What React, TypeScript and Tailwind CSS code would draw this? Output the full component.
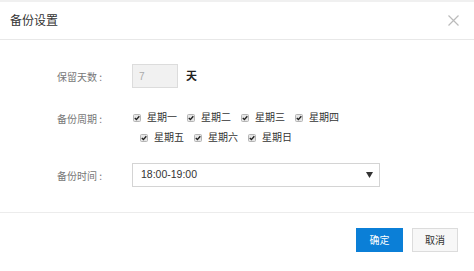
import React from 'react';

const days1 = ['星期一', '星期二', '星期三', '星期四'];
const days2 = ['星期五', '星期六', '星期日'];

function Check({ label }: { label: string }) {
    return (
        <label className="flex items-center mr-[10px]">
            <svg width="8" height="8" viewBox="0 0 8 8" className="mr-[6px]">
                <rect x="0.5" y="0.5" width="7" height="7" rx="1" fill="#e6e6e6" stroke="#b5b5b5" />
                <path d="M1.8 4.1 L3.4 5.6 L6.3 2.2" fill="none" stroke="#222" strokeWidth="1.4" />
            </svg>
            <span className="text-[10px] leading-none text-[#333]">{label}</span>
        </label>
    );
}

export default function App() {
    return (
        <div className="w-[474px] h-[271px] bg-white border-t-2 border-[#f0f0f0] font-['Liberation_Sans','Noto_Sans_CJK_SC',sans-serif]">
            <div className="h-[38px] flex items-center justify-between pl-[10px] pr-[15px] border-b border-[#e8e8e8]">
                <span className="text-[12px] text-[#333]">备份设置</span>
                <svg width="11" height="11" viewBox="0 0 11 11">
                    <path d="M0.5 0.5 L10.5 10.5 M10.5 0.5 L0.5 10.5" stroke="#bbb" strokeWidth="1.2" />
                </svg>
            </div>

            <div className="pl-[57px] h-[173px] pt-[24px] border-b border-[#ececec]">
                <div className="flex items-center h-[24px]">
                    <span className="w-[75px] text-[10px] text-[#777] font-['Noto_Sans_CJK_SC',sans-serif]">保留天数 :</span>
                    <div className="w-[46px] h-[24px] bg-[#f1f1f1] border border-[#dcdcdc] flex items-center pl-[6px] text-[10px] text-[#aaa]">7</div>
                    <span className="ml-[8px] text-[11px] font-bold text-[#222]">天</span>
                </div>

                <div className="flex mt-[22px]">
                    <span className="w-[75px] h-[16px] flex items-center text-[10px] text-[#777] font-['Noto_Sans_CJK_SC',sans-serif]">备份周期 :</span>
                    <div className="flex flex-col">
                        <div className="flex h-[16px] items-center ml-[1px]">
                            {days1.map((d) => <Check key={d} label={d} />)}
                        </div>
                        <div className="flex h-[16px] items-center mt-[4px] ml-[8px]">
                            {days2.map((d) => <Check key={d} label={d} />)}
                        </div>
                    </div>
                </div>

                <div className="flex items-center mt-[17px]">
                    <span className="w-[75px] text-[10px] text-[#777] font-['Noto_Sans_CJK_SC',sans-serif]">备份时间 :</span>
                    <div className="w-[248px] h-[24px] border border-[#d4d4d4] flex items-center justify-between pl-[8px] pr-[6px]">
                        <span className="text-[10.5px] text-[#333]">18:00-19:00</span>
                        <svg width="7" height="6" viewBox="0 0 7 6">
                            <path d="M0 0 L7 0 L3.5 6 Z" fill="#333" />
                        </svg>
                    </div>
                </div>
            </div>

            <div className="flex justify-end pr-[16px] pt-[15px] gap-[9px]">
                <button className="w-[47px] h-[24px] bg-[#0b7fd7] text-white text-[10px]">确定</button>
                <button className="w-[46px] h-[24px] bg-[#f7f7f7] border border-[#dcdcdc] text-[#333] text-[10px]">取消</button>
            </div>
        </div>
    );
}
